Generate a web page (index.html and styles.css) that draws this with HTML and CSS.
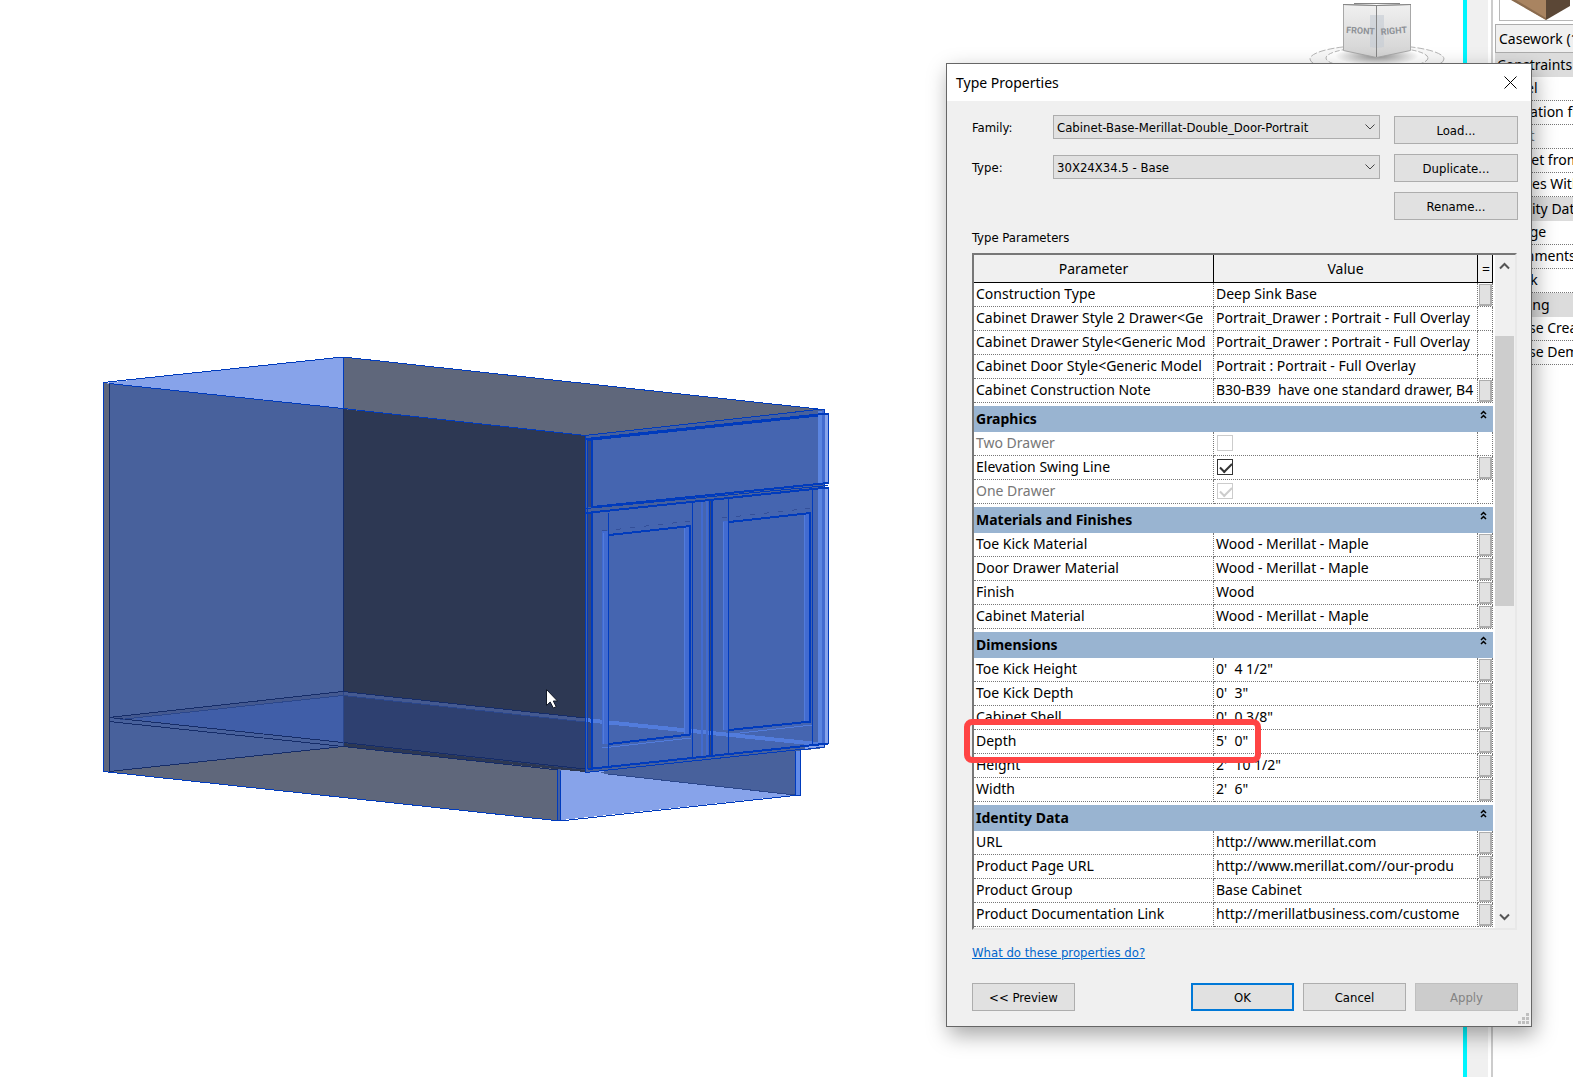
FILE: index.html
```
<!DOCTYPE html>
<html lang="en">
	<head>
		<meta charset="utf-8">
		<title>Type Properties</title>
		<link rel="stylesheet" href="styles.css">
	</head>

	<body>
		<main class="viewport">
			<!-- 3D view of the cabinet -->
			<svg class="model" width="860" height="840" viewBox="0 0 860 840" shape-rendering="crispEdges" aria-hidden="true">
				<!-- toe kick -->
				<path fill="#5f677b" d="M104 772L343 744L562 766V821z"/>
				<path fill="#48619c" d="M557 769h4v51h-4z"/>
				<path fill="#87a3ea" d="M561 769L610 770L795 795L561 820z"/>
				<path fill="#48619c" d="M600 773L620 766L795 745V795z"/>
				<path fill="#628be8" d="M795 745h6v50h-6z"/>
				<!-- carcass -->
				<path fill="#5f677b" d="M103 383h7v389h-7z"/>
				<path fill="#87a3ea" d="M104 383L343 357V409L109 384z"/>
				<path fill="#5f677b" d="M343 357L819 409L585 436L343 409z"/>
				<path fill="#48619c" d="M110 384L343 409V746L110 771z"/>
				<path fill="#2d3853" d="M343 409L585 436V772L343 747z"/>
				<path fill="#445990" d="M110 717L343 691L585 718V722L343 696L120 719z"/>
				<path fill="#405ea8" d="M132 719L343 696V743z"/>
				<path fill="#2e4070" d="M343 696L585 722V770L343 743z"/>
				<!-- front -->
				<path fill="#48619c" d="M585 436L818 409H825V748L585 773z"/>
				<path fill="#4565b0" d="M592 440L828 414V484L592 507z"/>
				<path fill="#4565b0" d="M592 513L828 488V743L592 769z"/>
				<path fill="#34467c" d="M587 441h4v66h-4zM587 514h4v255h-4zM709 500h3v256h-3z"/>
				<path fill="#527cdc" d="M585 718L818 742V746L760 740L585 722z"/>
				<path fill="#5b85e0" d="M818 411h4v72h-4zM818 489h4v255h-4z"/>
				<path fill="#426bd0" d="M822 410h3v74h-3zM822 488h3v257h-3z"/>
				<path fill="#87a3ea" d="M825 414h3v69h-3zM825 488h3v256h-3zM805 746l20-3v4l-20 3z"/>
				<path fill="#426bd0" d="M602 531h6v213h-6zM685 527h4v208h-4zM701 502h2v256h-2zM706 501h2v256h-2zM723 521h6v209h-6zM804 514h5v207h-5z"/>
				<path fill="none" stroke="#527cdc" d="M603.500 533V744M684.500 528V734M723.500 522V730M804.500 515V722M602 748L691 738M722 735L812 725"/>
				<path fill="none" stroke="#34509a" stroke-dasharray="5 9" d="M602 531L691 521M722 518L812 508"/>
				<!-- hidden edges -->
				<path fill="none" stroke="#152c68" d="M109.500 384V771M343.500 409V691M109 717.500L343 691.500L585 718M109 717.500L343 742.500L585 769M109 721.500L343 746.500L558 770M109 771.500L343 746.500"/>
				<path fill="none" stroke="#2b478c" d="M120 719.500L343 695.500L585 722M343.500 692V746M608 774L795 795"/>
				<!-- visible edges -->
				<g fill="none" stroke="#003bbd">
					<path d="M103.500 382V771.500L560 821L795 795.500H800.500V749.500M557.500 770V821M560.500 771V821M795.500 751V795"/>
					<path d="M103 382.500L343 357L818 409H824.500V413M343.500 357V409M109 383.500L343 408.500L585 435.500L818 409.500"/>
					<path d="M585.500 436V772M587.500 438V769M828.500 413V483.500H824.500V487.500H828.500V743.500H824.500V747L800 750M825.500 413.500H828"/>
					<path stroke-width="2" d="M592 440V507M592 513V768M586 439L828 413.500M588 440L818 415.500M592 507L828 483M586 513L828 487.500M588 769L828 743.500"/>
					<path d="M586 508.500L828 485.500M585 772.500L800 749.500M608.500 513V766M692.500 503V757M709.500 500V756M728.500 499V754M812.500 490V744"/>
					<path stroke-width="2" d="M690 526V735M712 499V756M810 513V722M609 535L691 526M609 744L690 734.500M729 522L811 513M729 730L811 721.500"/>
				</g>
				<!-- mouse pointer -->
				<path fill="#fff" stroke="#111827" shape-rendering="auto" d="M546.500 689.500V705.500L550.200 702L553.300 708L556.200 706.700L553.300 701H557.500z"/>
			</svg>
			<!-- view cube -->
			<svg class="view-cube" width="150" height="80" viewBox="0 0 150 80" aria-hidden="true">
				<defs>
					<linearGradient id="cube-face" x1="0" y1="0" x2="0" y2="1">
						<stop offset="0" stop-color="#f0f0f0"/>
						<stop offset="1" stop-color="#d2d2d2"/>
					</linearGradient>
					<radialGradient id="cube-shadow">
						<stop offset="0" stop-color="#909090"/>
						<stop offset="1" stop-color="#909090" stop-opacity="0"/>
					</radialGradient>
				</defs>
				<ellipse cx="77" cy="59" rx="67" ry="14" fill="#f8f8f8" stroke="#b5b5b5" stroke-dasharray="7 2"/>
				<ellipse cx="77" cy="58" rx="51" ry="11" fill="#fff" stroke="#b5b5b5" stroke-dasharray="5 2"/>
				<ellipse cx="77" cy="56" rx="42" ry="9" fill="url(#cube-shadow)"/>
				<path fill="url(#cube-face)" stroke="#a8a8a8" d="M43.500 4.500L76.500 5.500V57.500L43.500 50.500z"/>
				<path fill="url(#cube-face)" stroke="#a8a8a8" d="M76.500 5.500L110.500 4.500V50.500L76.500 57.500z"/>
				<path fill="#c5cbd3" opacity=".6" d="M70 15H84V47L77 48L70 47z"/>
				<path fill="none" stroke="#858585" d="M43 4.500L76.500 5.500L111 4.500M54 3.500H100M76.500 5V57"/>
				<text class="cube-label" x="46" y="33" transform="rotate(3 46 33)">FRONT</text>
				<text class="cube-label" x="81" y="35" transform="rotate(-5 81 35)">RIGHT</text>
			</svg>
		</main>

		<div class="splitter"></div>

		<aside class="palette">
			<div class="preview">
				<svg width="76" height="20" viewBox="0 0 76 20" aria-hidden="true">
					<path fill="#a98461" d="M12 0H46V20z"/>
					<path fill="#5b4736" d="M46 0H70V6L46 20z"/>
					<path fill="#8a6b4e" d="M11 0H16L46 18V20z"/>
				</svg>
			</div>
			<div class="filter">Casework (1)</div>
			<ul class="instance">
				<li class="group">Constraints</li>
				<li>Level</li>
				<li>Elevation from Level</li>
				<li class="muted">Host</li>
				<li>Offset from Host</li>
				<li>Moves With Nearby</li>
				<li class="group">Identity Data</li>
				<li>Image</li>
				<li>Comments</li>
				<li>Mark</li>
				<li class="group">Phasing</li>
				<li>Phase Created</li>
				<li>Phase Demolished</li>
			</ul>
		</aside>

		<section class="dialog" role="dialog" aria-labelledby="dialog-title">
			<header class="titlebar">
				<h1 id="dialog-title">Type Properties</h1>
				<button class="close" type="button" aria-label="Close">
					<svg width="13" height="13" viewBox="0 0 13 13"><path fill="none" stroke="#000" d="M.5 .5L12.500 12.500M12.500 .5L.5 12.500"/></svg>
				</button>
			</header>

			<div class="content">
				<div class="top">
					<div class="fields">
						<label for="family">Family:</label>
						<div class="select">
							<select id="family"><option>Cabinet-Base-Merillat-Double_Door-Portrait</option></select>
							<svg width="10" height="6" viewBox="0 0 10 6"><path fill="none" stroke="#444" d="M.5 .5L5 5L9.500 .5"/></svg>
						</div>
						<label for="type">Type:</label>
						<div class="select">
							<select id="type"><option>30X24X34.5 - Base</option></select>
							<svg width="10" height="6" viewBox="0 0 10 6"><path fill="none" stroke="#444" d="M.5 .5L5 5L9.500 .5"/></svg>
						</div>
					</div>
					<div class="actions">
						<button class="btn" type="button">Load...</button>
						<button class="btn" type="button">Duplicate...</button>
						<button class="btn" type="button">Rename...</button>
					</div>
				</div>

				<p class="caption" id="params-caption">Type Parameters</p>
				<div class="params">
					<div class="table-wrap">
						<table aria-labelledby="params-caption">
							<colgroup><col class="col-name"><col><col class="col-assoc"></colgroup>
							<thead>
								<tr><th>Parameter</th><th>Value</th><th class="eq">=</th></tr>
							</thead>
							<tbody>
								<tr><td>Construction Type</td><td>Deep Sink Base</td><td><button class="assoc" type="button" aria-label="Associate"></button></td></tr>
								<tr><td>Cabinet Drawer Style 2 Drawer&lt;Ge</td><td>Portrait_Drawer : Portrait - Full Overlay</td><td></td></tr>
								<tr><td>Cabinet Drawer Style&lt;Generic Mod</td><td>Portrait_Drawer : Portrait - Full Overlay</td><td></td></tr>
								<tr><td>Cabinet Door Style&lt;Generic Model</td><td>Portrait : Portrait - Full Overlay</td><td></td></tr>
								<tr><td>Cabinet Construction Note</td><td>B30-B39&nbsp; have one standard drawer, B4</td><td><button class="assoc" type="button" aria-label="Associate"></button></td></tr>
							</tbody>
							<tbody>
								<tr class="section"><th colspan="3">Graphics<svg width="7" height="9" viewBox="0 0 7 9"><path d="M1 4L3.500 1.500L6 4M1 8L3.500 5.500L6 8"/></svg></th></tr>
								<tr class="muted"><td><label for="two-drawer">Two Drawer</label></td><td><input id="two-drawer" type="checkbox" disabled></td><td></td></tr>
								<tr><td><label for="swing-line">Elevation Swing Line</label></td><td><input id="swing-line" type="checkbox" checked></td><td><button class="assoc" type="button" aria-label="Associate"></button></td></tr>
								<tr class="muted"><td><label for="one-drawer">One Drawer</label></td><td><input id="one-drawer" type="checkbox" checked disabled></td><td></td></tr>
							</tbody>
							<tbody>
								<tr class="section"><th colspan="3">Materials and Finishes<svg width="7" height="9" viewBox="0 0 7 9"><path d="M1 4L3.500 1.500L6 4M1 8L3.500 5.500L6 8"/></svg></th></tr>
								<tr><td>Toe Kick Material</td><td>Wood - Merillat - Maple</td><td><button class="assoc" type="button" aria-label="Associate"></button></td></tr>
								<tr><td>Door Drawer Material</td><td>Wood - Merillat - Maple</td><td><button class="assoc" type="button" aria-label="Associate"></button></td></tr>
								<tr><td>Finish</td><td>Wood</td><td><button class="assoc" type="button" aria-label="Associate"></button></td></tr>
								<tr><td>Cabinet Material</td><td>Wood - Merillat - Maple</td><td><button class="assoc" type="button" aria-label="Associate"></button></td></tr>
							</tbody>
							<tbody>
								<tr class="section"><th colspan="3">Dimensions<svg width="7" height="9" viewBox="0 0 7 9"><path d="M1 4L3.500 1.500L6 4M1 8L3.500 5.500L6 8"/></svg></th></tr>
								<tr><td>Toe Kick Height</td><td>0'&nbsp; 4 1/2"</td><td><button class="assoc" type="button" aria-label="Associate"></button></td></tr>
								<tr><td>Toe Kick Depth</td><td>0'&nbsp; 3"</td><td><button class="assoc" type="button" aria-label="Associate"></button></td></tr>
								<tr><td>Cabinet Shell</td><td>0'&nbsp; 0 3/8"</td><td><button class="assoc" type="button" aria-label="Associate"></button></td></tr>
								<tr><td>Depth</td><td>5'&nbsp; 0"</td><td><button class="assoc" type="button" aria-label="Associate"></button></td></tr>
								<tr><td>Height</td><td>2'&nbsp; 10 1/2"</td><td><button class="assoc" type="button" aria-label="Associate"></button></td></tr>
								<tr><td>Width</td><td>2'&nbsp; 6"</td><td><button class="assoc" type="button" aria-label="Associate"></button></td></tr>
							</tbody>
							<tbody>
								<tr class="section"><th colspan="3">Identity Data<svg width="7" height="9" viewBox="0 0 7 9"><path d="M1 4L3.500 1.500L6 4M1 8L3.500 5.500L6 8"/></svg></th></tr>
								<tr><td>URL</td><td>http://www.merillat.com</td><td><button class="assoc" type="button" aria-label="Associate"></button></td></tr>
								<tr><td>Product Page URL</td><td>http://www.merillat.com//our-produ</td><td><button class="assoc" type="button" aria-label="Associate"></button></td></tr>
								<tr><td>Product Group</td><td>Base Cabinet</td><td><button class="assoc" type="button" aria-label="Associate"></button></td></tr>
								<tr><td>Product Documentation Link</td><td>http://merillatbusiness.com/custome</td><td><button class="assoc" type="button" aria-label="Associate"></button></td></tr>
							</tbody>
						</table>
					</div>
					<div class="scrollbar">
						<button type="button" aria-label="Scroll up"><svg width="11" height="8" viewBox="0 0 11 8"><path fill="none" stroke="#555" stroke-width="2" d="M1 6.500L5.500 2L10 6.500"/></svg></button>
						<div class="track"><div class="thumb"></div></div>
						<button type="button" aria-label="Scroll down"><svg width="11" height="8" viewBox="0 0 11 8"><path fill="none" stroke="#555" stroke-width="2" d="M1 1.500L5.500 6L10 1.500"/></svg></button>
					</div>
				</div>

				<a class="help" href="#">What do these properties do?</a>

				<footer class="buttons">
					<button class="btn preview-btn" type="button">&lt;&lt; Preview</button>
					<button class="btn primary" type="button">OK</button>
					<button class="btn" type="button">Cancel</button>
					<button class="btn" type="button" disabled>Apply</button>
				</footer>
			</div>

			<!-- red marker round the Depth row -->
			<div class="marker"></div>
			<svg class="grip" width="11" height="11" viewBox="0 0 11 11" aria-hidden="true"><path fill="#bfbfbf" d="M8 0h3v3H8zM4 4h3v3H4zM8 4h3v3H8zM0 8h3v3H0zM4 8h3v3H4zM8 8h3v3H8z"/></svg>
		</section>
	</body>
</html>
```

FILE: styles.css
```
:root {
	--ui: "Noto Sans", "Open Sans", sans-serif;
	--small: "DejaVu Sans Condensed", "DejaVu Sans", sans-serif;
	--face: #f0f0f0;
	--line: #adadad;
}

* {
	box-sizing: border-box;
	margin: 0;
	padding: 0;
}

body {
	background: #fff;
	color: #000;
	display: flex;
	font-family: var(--ui);
	font-size: 14px;
	height: 100vh;
	overflow: hidden;
	position: relative;
}

button, select {
	color: inherit;
	font: inherit;
}

/* drawing area */
.viewport {
	border-right: 4px solid #00f6ff;
	flex: 1;
	min-width: 0;
	position: relative;
}

.model {
	display: block;
}

.view-cube {
	position: absolute;
	right: 13px;
	top: 0;
}

.cube-label {
	fill: #8e9297;
	font-family: Roboto, "Liberation Sans", sans-serif;
	font-size: 9px;
	font-weight: bold;
}

.splitter {
	background: var(--face);
	border-right: 3px solid #fff;
	width: 24px;
}

/* properties palette behind the dialog */
.palette {
	border-left: 2px solid #ccc;
	flex: 0 0 82px;
	overflow: hidden;
	padding-left: 2px;
	white-space: nowrap;
}

.preview {
	border: solid #b8b8b8;
	border-width: 0 0 1px 1px;
	height: 21px;
	margin: 0 0 3px 4px;
	overflow: hidden;
}

.preview svg {
	display: block;
}

.filter {
	background: var(--face);
	border: 1px solid var(--line);
	border-right: 0;
	height: 29px;
	line-height: 28px;
	padding-left: 3px;
}

.instance {
	list-style: none;
}

.instance li {
	border-bottom: 1px dotted #777;
	height: 24px;
	line-height: 22px;
	padding-left: 9px;
}

.instance .group {
	background: #dcdcdc;
	border-bottom: 0;
	line-height: 24px;
	padding-left: 2px;
}

.instance .muted,
.muted {
	color: #777;
}

/* dialog */
.dialog {
	background: var(--face);
	border: 1px solid #666;
	box-shadow: 3px 8px 20px rgba(0, 0, 0, .35);
	position: absolute;
	right: 41px;
	top: 63px;
	width: 586px;
}

.titlebar {
	align-items: center;
	background: #fff;
	display: flex;
	height: 37px;
	justify-content: space-between;
	padding: 0 14px 1px 9px;
}

.titlebar h1 {
	font-size: 14px;
	font-weight: normal;
}

.close {
	background: none;
	border: 0;
	line-height: 0;
}

.content {
	font-family: var(--small);
	font-size: 13px;
	line-height: 16px;
	padding: 14px 13px 15px 25px;
}

.top {
	display: flex;
	gap: 14px;
}

.fields {
	align-content: start;
	align-items: center;
	display: grid;
	flex: 1;
	grid-template-columns: 81px 1fr;
	row-gap: 16px;
}

.fields label {
	padding-top: 2px;
}

.select {
	position: relative;
}

.select select {
	appearance: none;
	background: #e1e1e1;
	border: 1px solid var(--line);
	display: block;
	height: 24px;
	padding: 2px 24px 0 3px;
	width: 100%;
}

.select svg {
	pointer-events: none;
	position: absolute;
	right: 5px;
	top: 9px;
}

.actions {
	display: flex;
	flex-direction: column;
	gap: 10px;
	padding-top: 1px;
	width: 124px;
}

.btn {
	background: #e1e1e1;
	border: 1px solid var(--line);
	height: 28px;
	padding-top: 2px;
}

.btn.primary {
	border: 2px solid #0078d7;
}

.btn:disabled {
	background: #ccc;
	border-color: #bfbfbf;
	color: #838383;
}

.caption {
	margin: 10px 0 7px;
}

/* parameter grid */
.params {
	background: #fff;
	border: 2px solid;
	border-color: #777 #e8e8e8 #e8e8e8 #777;
	display: flex;
	gap: 2px;
	height: 677px;
	margin-right: 1px;
}

.table-wrap {
	flex: 1;
	overflow: hidden;
}

table {
	border-collapse: separate;
	border-spacing: 0;
	font-family: var(--ui);
	font-size: 14px;
	table-layout: fixed;
	width: 100%;
}

.col-name {
	width: 240px;
}

.col-assoc {
	width: 15px;
}

thead th {
	background: var(--face);
	border: solid #000;
	border-width: 0 1px 1px 0;
	font-weight: normal;
	height: 28px;
}

thead .eq {
	padding-right: 2px;
	text-align: right;
}

td {
	border: dotted #777;
	border-width: 0 1px 1px 0;
	height: 24px;
	line-height: 20px;
	overflow: hidden;
	padding: 0 0 1px 2px;
	vertical-align: middle;
	white-space: nowrap;
}

td:last-child {
	padding: 1px 0 0 1px;
}

.section th {
	background: #99b4d1;
	background-clip: padding-box;
	border-top: 3px solid #fff;
	height: 29px;
	line-height: 26px;
	padding: 0 6px 0 2px;
	text-align: left;
}

.section svg {
	fill: none;
	float: right;
	margin-top: 4px;
	stroke: #000;
	stroke-width: 1.5;
}

.assoc {
	background: #e1e1e1;
	border: solid var(--line);
	border-width: 1px 2px 2px 1px;
	display: block;
	height: 22px;
	width: 13px;
}

input[type="checkbox"] {
	appearance: none;
	background: #fff;
	border: 1px solid #333;
	display: block;
	height: 16px;
	margin-left: 1px;
	position: relative;
	width: 16px;
}

input[type="checkbox"]:disabled {
	border-color: #ccc;
}

input[type="checkbox"]:checked::after {
	border: solid #333;
	border-width: 0 0 2px 2px;
	content: "";
	height: 5px;
	left: 2px;
	position: absolute;
	top: 3px;
	transform: rotate(-45deg);
	width: 10px;
}

input[type="checkbox"]:disabled::after {
	border-color: #ccc;
}

.scrollbar {
	background: var(--face);
	display: flex;
	flex-direction: column;
	width: 20px;
}

.scrollbar button {
	background: none;
	border: 0;
	height: 22px;
	line-height: 0;
	padding-right: 2px;
}

.track {
	flex: 1;
	padding: 59px 1px 0 0;
}

.thumb {
	background: #cdcdcd;
	height: 270px;
}

.help {
	color: #0066cc;
	display: block;
	margin: 15px 0 22px;
	width: max-content;
}

.buttons {
	display: flex;
	gap: 9px;
}

.buttons .btn {
	width: 103px;
}

.preview-btn {
	margin-right: auto;
}

.marker {
	border: 6px solid #ff4444;
	border-radius: 8px;
	height: 44px;
	left: 17px;
	position: absolute;
	top: 655px;
	width: 297px;
}

.grip {
	bottom: 2px;
	position: absolute;
	right: 2px;
}
```
